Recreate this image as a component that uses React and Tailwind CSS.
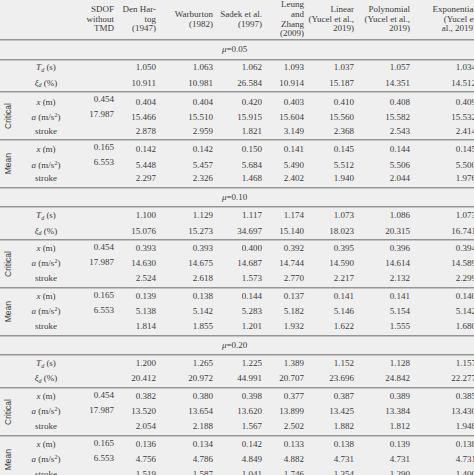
import React from 'react';

// column widths: label, SDOF, Den Hartog, Warburton, Sadek, Leung, Linear, Polynomial, Exponential
const COLS = 'grid grid-cols-[60px_38px_42px_57px_49px_42px_50px_56px_66px]';

const HEADERS = [
  ['SDOF', 'without', 'TMD'],
  ['Den Har-', 'tog', '(1947)'],
  ['Warburton', '(1982)'],
  ['Sadek et al.', '(1997)'],
  ['Leung', 'and', 'Zhang', '(2009)'],
  ['Linear', '(Yucel et al.,', '2019)'],
  ['Polynomial', '(Yucel et al.,', '2019)'],
  ['Exponential', '(Yucel et', 'al., 2019)'],
];

const BLOCKS = [
  {
    mu: '0.05',
    lift: 'pb-[5px]',
    td: ['', '1.050', '1.063', '1.062', '1.093', '1.037', '1.057', '1.034'],
    xi: ['', '10.911', '10.981', '26.584', '10.914', '15.187', '14.351', '14.512'],
    critical: [
      ['0.454', '0.404', '0.404', '0.420', '0.403', '0.410', '0.408', '0.409'],
      ['17.987', '15.466', '15.510', '15.915', '15.604', '15.560', '15.582', '15.532'],
      ['', '2.878', '2.959', '1.821', '3.149', '2.368', '2.543', '2.414'],
    ],
    mean: [
      ['0.165', '0.142', '0.142', '0.150', '0.141', '0.145', '0.144', '0.145'],
      ['6.553', '5.448', '5.457', '5.684', '5.490', '5.512', '5.506', '5.500'],
      ['', '2.297', '2.326', '1.468', '2.402', '1.940', '2.044', '1.976'],
    ],
  },
  {
    mu: '0.10',
    lift: 'pb-[2px]',
    td: ['', '1.100', '1.129', '1.117', '1.174', '1.073', '1.086', '1.073'],
    xi: ['', '15.076', '15.273', '34.697', '15.140', '18.023', '20.315', '16.741'],
    critical: [
      ['0.454', '0.393', '0.393', '0.400', '0.392', '0.395', '0.396', '0.394'],
      ['17.987', '14.630', '14.675', '14.687', '14.744', '14.590', '14.614', '14.589'],
      ['', '2.524', '2.618', '1.573', '2.770', '2.217', '2.132', '2.299'],
    ],
    mean: [
      ['0.165', '0.139', '0.138', '0.144', '0.137', '0.141', '0.141', '0.140'],
      ['6.553', '5.138', '5.142', '5.283', '5.182', '5.146', '5.154', '5.142'],
      ['', '1.814', '1.855', '1.201', '1.932', '1.622', '1.555', '1.680'],
    ],
  },
  {
    mu: '0.20',
    lift: 'pb-[2px]',
    td: ['', '1.200', '1.265', '1.225', '1.389', '1.152', '1.128', '1.157'],
    xi: ['', '20.412', '20.972', '44.991', '20.707', '23.696', '24.842', '22.277'],
    critical: [
      ['0.454', '0.382', '0.380', '0.398', '0.377', '0.387', '0.389', '0.385'],
      ['17.987', '13.520', '13.654', '13.620', '13.899', '13.425', '13.384', '13.430'],
      ['', '2.054', '2.188', '1.567', '2.502', '1.882', '1.812', '1.948'],
    ],
    mean: [
      ['0.165', '0.136', '0.134', '0.142', '0.133', '0.138', '0.139', '0.138'],
      ['6.553', '4.756', '4.786', '4.849', '4.882', '4.731', '4.731', '4.731'],
      ['', '1.519', '1.587', '1.041', '1.746', '1.354', '1.290', '1.400'],
    ],
  },
];

const Rule = () => <div className="h-[2px] bg-[#959595] border-b border-b-[#c4c4c4]" />;

const TdLabel = () => (
  <span><i>T</i><sub className="text-[6px] italic">d</sub> (s)</span>
);
const XiLabel = () => (
  <span><i>ξ</i><sub className="text-[6px] italic">d</sub> (%)</span>
);
const XLabel = () => <span><i>x</i> (m)</span>;
const ALabel = () => <span><i>a</i> (m/s<sup className="text-[6px]">2</sup>)</span>;

function DataRow({ label, values, lift }) {
  return (
    <div className={`${COLS} h-[15.3px] items-center`}>
      <div className="text-center">{label}</div>
      {values.map((v, i) => (
        <div key={i} className={`text-right ${i === 0 && lift ? lift : ''}`}>{v}</div>
      ))}
    </div>
  );
}

function Section({ title, children }) {
  return (
    <div className="flex">
      <div className="w-[16px] flex items-center justify-center">
        {title && (
          <span className="[writing-mode:vertical-rl] rotate-180 whitespace-nowrap font-['Liberation_Sans',sans-serif] text-[8.5px]">
            {title}
          </span>
        )}
      </div>
      <div className="flex flex-col">{children}</div>
    </div>
  );
}

function Block({ block }) {
  const labels = [<XLabel key="x" />, <ALabel key="a" />, 'stroke'];
  return (
    <>
      <div className="h-[17.5px] flex items-center pl-[222px]">
        <span><i>μ</i>={block.mu}</span>
      </div>
      <Rule />
      <Section>
        <DataRow label={<TdLabel />} values={block.td} />
        <DataRow label={<XiLabel />} values={block.xi} />
      </Section>
      <Rule />
      <Section title="Critical">
        {block.critical.map((vals, i) => (
          <DataRow key={i} label={labels[i]} values={vals} lift={block.lift} />
        ))}
      </Section>
      <Rule />
      <Section title="Mean">
        {block.mean.map((vals, i) => (
          <DataRow key={i} label={labels[i]} values={vals} lift={block.lift} />
        ))}
      </Section>
      <Rule />
    </>
  );
}

export default function App() {
  return (
    <div className="w-[474px] h-[475px] overflow-hidden bg-[#efefef] text-[#3c3c3c] text-[9px] font-['Liberation_Serif',serif]">
      <div className="w-[476px]">
        <div className="flex h-[39px]">
          <div className="w-[76px]" />
          <div className="grid grid-cols-[38px_42px_57px_49px_42px_50px_56px_66px] items-center leading-[9.8px]">
            {HEADERS.map((lines, i) => (
              <div key={i} className="text-right whitespace-nowrap">
                {lines.map((l, j) => (
                  <div key={j}>{l}</div>
                ))}
              </div>
            ))}
          </div>
        </div>
        <Rule />
        {BLOCKS.map((b) => (
          <Block key={b.mu} block={b} />
        ))}
      </div>
    </div>
  );
}
